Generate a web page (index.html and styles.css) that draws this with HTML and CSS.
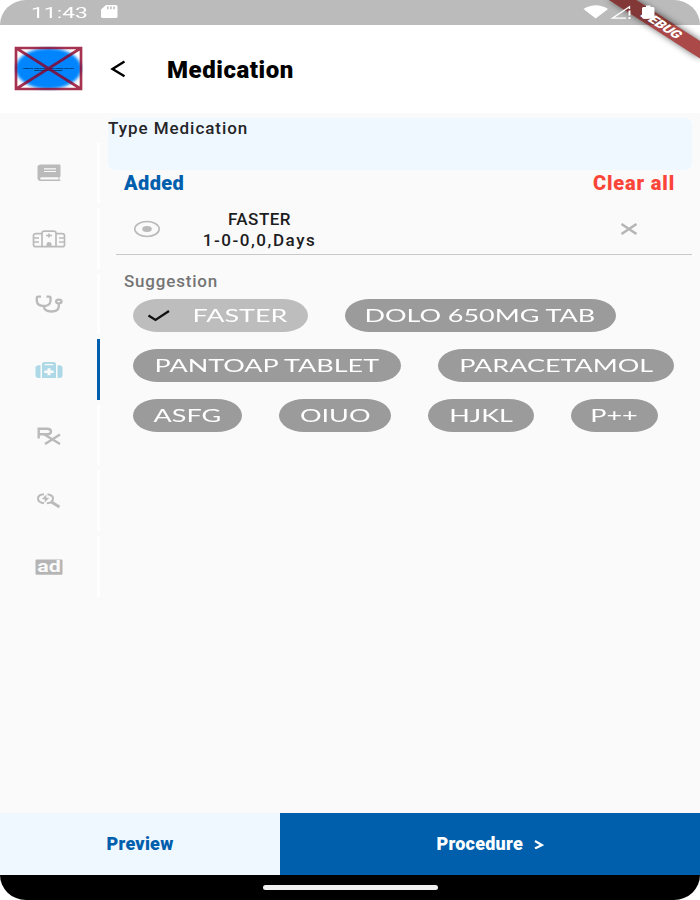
FILE: index.html
```html
<!DOCTYPE html>
<html lang="en">
<head>
<meta charset="utf-8">
<title>Medication</title>
<link rel="stylesheet" href="styles.css">
</head>
<body>
<div class="device">
  <div class="statusbar">
    <span class="clock">11:43</span>
    <svg class="sd" width="17" height="14" viewBox="0 0 17 14"><path fill="#fff" d="M5 0H14.5Q16.5 0 16.5 1.5V11.5Q16.5 13 14.5 13H2Q0 13 0 11.5V4.5Z"/><path stroke="#bbb" stroke-width="1.5" d="M6.8 1.5v2.8M9.9 1.5v2.8M13 1.5v2.8"/></svg>
  </div>

  <svg class="ribbon" width="120" height="80" viewBox="580 0 120 80">
    <defs><filter id="soft" x="-30%" y="-30%" width="160%" height="160%"><feGaussianBlur stdDeviation="4.5 3"/></filter></defs>
    <path d="M608.500 -1L635 -1L701 41.500V59Z" fill="#000" opacity=".62" filter="url(#soft)"/>
    <path d="M607.500 -1H634.500L700 41V58.500Z" fill="#ab4848"/>
    <path d="M607.500 -1H634.500L675 25H648.500Z" fill="#833838"/>
    <text class="debug" transform="matrix(1.124 .728 -1.124 .728 662 24.600)" text-anchor="middle" y="3.700">DEBUG</text>
    <path fill="#fff" d="M583.500 9Q596 1.500 608 9L595.700 18.500ZM643.500 7H646V5.500H650.500V7H653Q654.500 7 654.500 8.500V17Q654.500 18.800 653 18.800H643.500Q642 18.800 642 17V8.500Q642 7 643.500 7Z"/>
    <path fill="none" stroke="#fff" stroke-width="1.300" d="M626 18.200H612.500L629.500 6.700V9"/>
    <path stroke="#fff" stroke-width="2" d="M629.500 10.500V15.500M629.500 17V19"/>
  </svg>

  <header class="header">
    <svg class="logo" width="69" height="45" viewBox="0 0 69 45">
      <defs><filter id="edge"><feGaussianBlur stdDeviation="1.600"/></filter></defs>
      <rect x="1.500" y="1.500" width="66" height="42" fill="#fff"/>
      <ellipse cx="34.500" cy="22.500" rx="33" ry="20.500" fill="#0085ff" filter="url(#edge)"/>
      <g class="tiny" text-anchor="middle"><text x="34.500" y="22.500" textLength="51" lengthAdjust="spacingAndGlyphs">Unable to load asset: assets/images/logo.png</text><text x="34.500" y="25" textLength="28" lengthAdjust="spacingAndGlyphs">Exception caught</text></g>
      <path d="M2 2H67V43H2ZL67 43M67 2L2 43" fill="none" stroke="#8f0025" stroke-opacity=".8" stroke-width="2.700"/>
    </svg>
    <svg class="back" width="16" height="18" viewBox="0 0 16 18"><path d="M14.500 1.500L2.500 9L14.500 16.300" fill="none" stroke="#000" stroke-width="2.400"/></svg>
    <h1 class="title">Medication</h1>
  </header>

  <div class="body">
    <nav class="rail">
      <div class="tab"><svg viewBox="0 0 34 18"><path fill="#bababa" fill-rule="evenodd" d="M9 .5H27.500Q28.500 .5 28.500 1.500V12Q28.500 13 27.500 13.300V15.700Q28.500 16 28.500 17H9Q5.500 17 5.500 14V3Q5.500 .5 9 .5ZM12 4.300V5.400H24V4.300ZM12 6.900V8H24V6.900ZM9.500 13.300Q8 13.800 8 14.500Q8 15.500 9.500 15.500H26.500V13.300Z"/></svg></div>
      <div class="tab"><svg viewBox="0 0 34 18"><g fill="none" stroke="#bababa" stroke-width="1.700"><path d="M10 3.700H4Q1.500 3.700 1.500 5.500V15Q1.500 16.700 4 16.700H30Q32.500 16.700 32.500 15V5.500Q32.500 3.700 30 3.700H24M10 16.700V3Q10 1.200 12.500 1.200H21.500Q24 1.200 24 3V16.700M1.500 8H7M1.500 12H7M27 8H32.500M27 12H32.500M14 5.500H20M17 3.500V7.500"/></g><path fill="#bababa" d="M14.500 17V14Q14.500 12 17 12Q19.500 12 19.500 14V17Z"/></svg></div>
      <div class="tab"><svg viewBox="0 0 34 18"><g fill="none" stroke="#bababa" stroke-width="2.300"><path d="M9 1.700H6Q4.800 1.700 4.800 2.800V6Q5.500 11 11.500 11Q18 11 18.500 6V2.800Q18.500 1.700 17 1.700H14.500M11.800 11Q12 16.500 19.500 16.500Q26.800 16.500 26.800 11V8.500"/><ellipse cx="26.800" cy="6.500" rx="2.700" ry="1.800"/></g></svg></div>
      <div class="tab tab-active"><svg viewBox="0 0 34 18"><path fill="#add8e6" fill-rule="evenodd" d="M7.500 4.200H8.500V17H7Q3.500 17 3.500 14.500V6.700Q3.500 4.200 7 4.200ZM25.500 4.200H27Q30.500 4.200 30.500 6.700V14.500Q30.500 17 27 17H25.500ZM10 4.200V3Q10 1 12.500 1H21.500Q24 1 24 3V17H10ZM12.700 3V4.200H21.300V3ZM15.500 7.200V9.600H12.300V12H15.500V14.300H18.500V12H21.700V9.600H18.500V7.200Z"/></svg></div>
      <div class="tab"><svg viewBox="0 0 34 18"><path d="M6.700 11.500V1.800H15Q19 1.800 19 4.600Q19 7.300 15 7.300H6.700M12 7.300L28 17M28 7.500L13 17" fill="none" stroke="#bababa" stroke-width="2.400"/></svg></div>
      <div class="tab"><svg viewBox="0 0 34 18"><path d="M12 2.300Q6 2.700 6 6.500Q6 10.500 12 11.200M15.500 2.200Q21 3 21 6.500Q21 10.800 14.800 11.300" fill="none" stroke="#bababa" stroke-width="2"/><path d="M19 9.700L27.500 15" stroke="#bababa" stroke-width="2.800"/><path fill="#bababa" d="M14.300 2.500L9.700 7.300H12.800L12.500 10.800L17.300 5.800H14.300Z"/></svg></div>
      <div class="tab"><svg viewBox="0 0 34 18"><rect x="3.500" y="1.500" width="27" height="15.200" rx="1" fill="#b5b5b5"/><text class="ad" x="17" y="14.400" text-anchor="middle" textLength="23.500" lengthAdjust="spacingAndGlyphs">ad</text></svg></div>
    </nav>

    <main class="content">
      <div class="search">Type Medication</div>
      <div class="added-head"><span class="added">Added</span><span class="clear">Clear all</span></div>
      <div class="entry">
        <svg class="eye" width="28" height="18" viewBox="0 0 28 18"><ellipse cx="14" cy="9" rx="12.200" ry="7.500" fill="none" stroke="#bababa" stroke-width="1.600"/><ellipse cx="14" cy="9" rx="4.800" ry="3" fill="#bababa"/></svg>
        <div class="entry-text"><div class="drug">FASTER</div><div class="dose">1-0-0,0,Days</div></div>
        <svg class="remove" width="18" height="14" viewBox="0 0 18 14"><path d="M1.500 2L16.500 12M16.500 2L1.500 12" stroke="#b5b5b5" stroke-width="2.500"/></svg>
      </div>
      <div class="suggestion">Suggestion</div>
      <div class="chips">
        <div class="row">
          <div class="chip chip-on" style="width:175px"><svg class="check" width="24" height="14" viewBox="0 0 24 14"><path d="M1.500 6.500L8.500 11L22 2" fill="none" stroke="#111" stroke-width="2.300"/></svg><span>FASTER</span></div>
          <div class="chip" style="width:270.5px"><span>DOLO 650MG TAB</span></div>
        </div>
        <div class="row">
          <div class="chip" style="width:267.5px"><span>PANTOAP TABLET</span></div>
          <div class="chip" style="width:236.5px"><span>PARACETAMOL</span></div>
        </div>
        <div class="row">
          <div class="chip" style="width:109px"><span>ASFG</span></div>
          <div class="chip" style="width:112px"><span>OIUO</span></div>
          <div class="chip" style="width:105.5px"><span>HJKL</span></div>
          <div class="chip" style="width:87.5px"><span>P++</span></div>
        </div>
      </div>
    </main>
  </div>

  <footer class="actions">
    <div class="preview"><span>Preview</span></div>
    <div class="next"><span>Procedure</span><svg width="10" height="10" viewBox="0 0 10 10"><path d="M1 2L8 6L1 9.500" fill="none" stroke="#fff" stroke-width="2.200"/></svg></div>
  </footer>
  <div class="navbar"><div class="handle"></div></div>
</div>
</body>
</html>
```
FILE: styles.css
```css
* { box-sizing: border-box; }
body { margin: 0; background: #fff; font-family: Roboto, "Liberation Sans", sans-serif; }
.device {
  position: relative;
  width: 700px;
  height: 900px;
  display: flex;
  flex-direction: column;
  overflow: hidden;
  border-radius: 26px / 25px;
  background: #fafafa;
}
.statusbar { height: 25px; flex: none; background: #bbb; display: flex; align-items: center; padding-left: 31px; }
.clock { width: 70px; padding-top: 1px; font-size: 15px; line-height: 25px; color: #fff; transform: scaleX(1.52); transform-origin: left; }
.sd { margin-top: -1px; }
.ribbon { position: absolute; top: 0; right: 0; z-index: 2; }
.debug { font-size: 10.2px; font-weight: 900; fill: #fff; }

.header { height: 87.5px; flex: none; background: #fff; display: flex; align-items: center; padding-left: 14px; }
.back { margin-left: 27px; }
.tiny { font-size: 2.3px; font-weight: 500; }
.title { margin: 3px 0 0 41px; font-size: 24px; font-weight: 900; line-height: 30px; letter-spacing: .55px; color: #000; }

.body { flex: 1; display: flex; min-height: 0; }
.rail { width: 100px; margin-right: 8px; padding-top: 27.5px; }
.tab { height: 65.6px; position: relative; padding: 1px 3px 0 0; display: flex; justify-content: center; align-items: center; }
.tab svg { width: 34px; height: 18px; }
.tab::after { content: ""; position: absolute; right: 0; top: 2.5px; bottom: 2.5px; width: 3.5px; background: #fff; }
.tab-active::after { background: #005fad; }
.ad { font-size: 16px; font-weight: 700; fill: #fafafa; }

.content { width: 584px; padding-top: 5.5px; }
.search { height: 52px; border-radius: 9px / 6px; background: #f0f8ff; color: #252528; font-size: 17px; font-weight: 500; line-height: 21px; letter-spacing: .95px; }
.added-head { height: 26px; display: flex; justify-content: space-between; padding: 0 17px 0 16px; font-size: 20px; font-weight: 900; line-height: 27px; }
.added { color: #005fad; letter-spacing: .4px; }
.clear { color: #fa4538; letter-spacing: .85px; }
.entry { height: 59px; margin-left: 8px; border-bottom: 1px solid #c9c9c9; display: flex; align-items: center; padding-left: 17px; }
.entry-text { width: 196px; text-align: center; font-size: 17px; font-weight: 500; line-height: 21px; color: #1d1d1f; padding-top: 9px; }
.drug { padding-left: 1px; letter-spacing: .5px; }
.dose { letter-spacing: 1.55px; margin-right: -1px; }
.eye { margin-top: 8px; }
.remove { margin: 7px 0 0 263px; }
.suggestion { height: 44px; padding: 15.5px 0 0 16px; font-size: 17px; font-weight: 500; line-height: 21px; letter-spacing: .8px; color: #757575; }
.chips { display: flex; flex-direction: column; gap: 17px; padding-left: 25px; }
.row { display: flex; gap: 37px; }
.chip { height: 33px; flex: none; border-radius: 25px / 16.5px; background: #9b9b9b; color: #fff; display: flex; justify-content: center; align-items: center; font-family: Lato, "Liberation Sans", sans-serif; font-size: 17px; white-space: nowrap; }
.chip span { transform: scaleX(1.585); }
.chip-on { background: #bdbdbd; justify-content: flex-start; padding-left: 14px; }
.chip-on span { margin-left: 39px; }

.actions { height: 62.5px; flex: none; display: flex; font-size: 18px; font-weight: 900; line-height: 22px; letter-spacing: .25px; }
.preview { width: 280px; background: #f0f8ff; color: #005fad; display: flex; justify-content: center; align-items: center; }
.next { flex: 1; background: #005fad; color: #fff; display: flex; justify-content: center; align-items: center; gap: 10.5px; }
.navbar { height: 25px; flex: none; background: #000; display: flex; justify-content: center; align-items: center; }
.handle { width: 175px; height: 4.5px; border-radius: 3px; background: #f0f0f0; }
```
